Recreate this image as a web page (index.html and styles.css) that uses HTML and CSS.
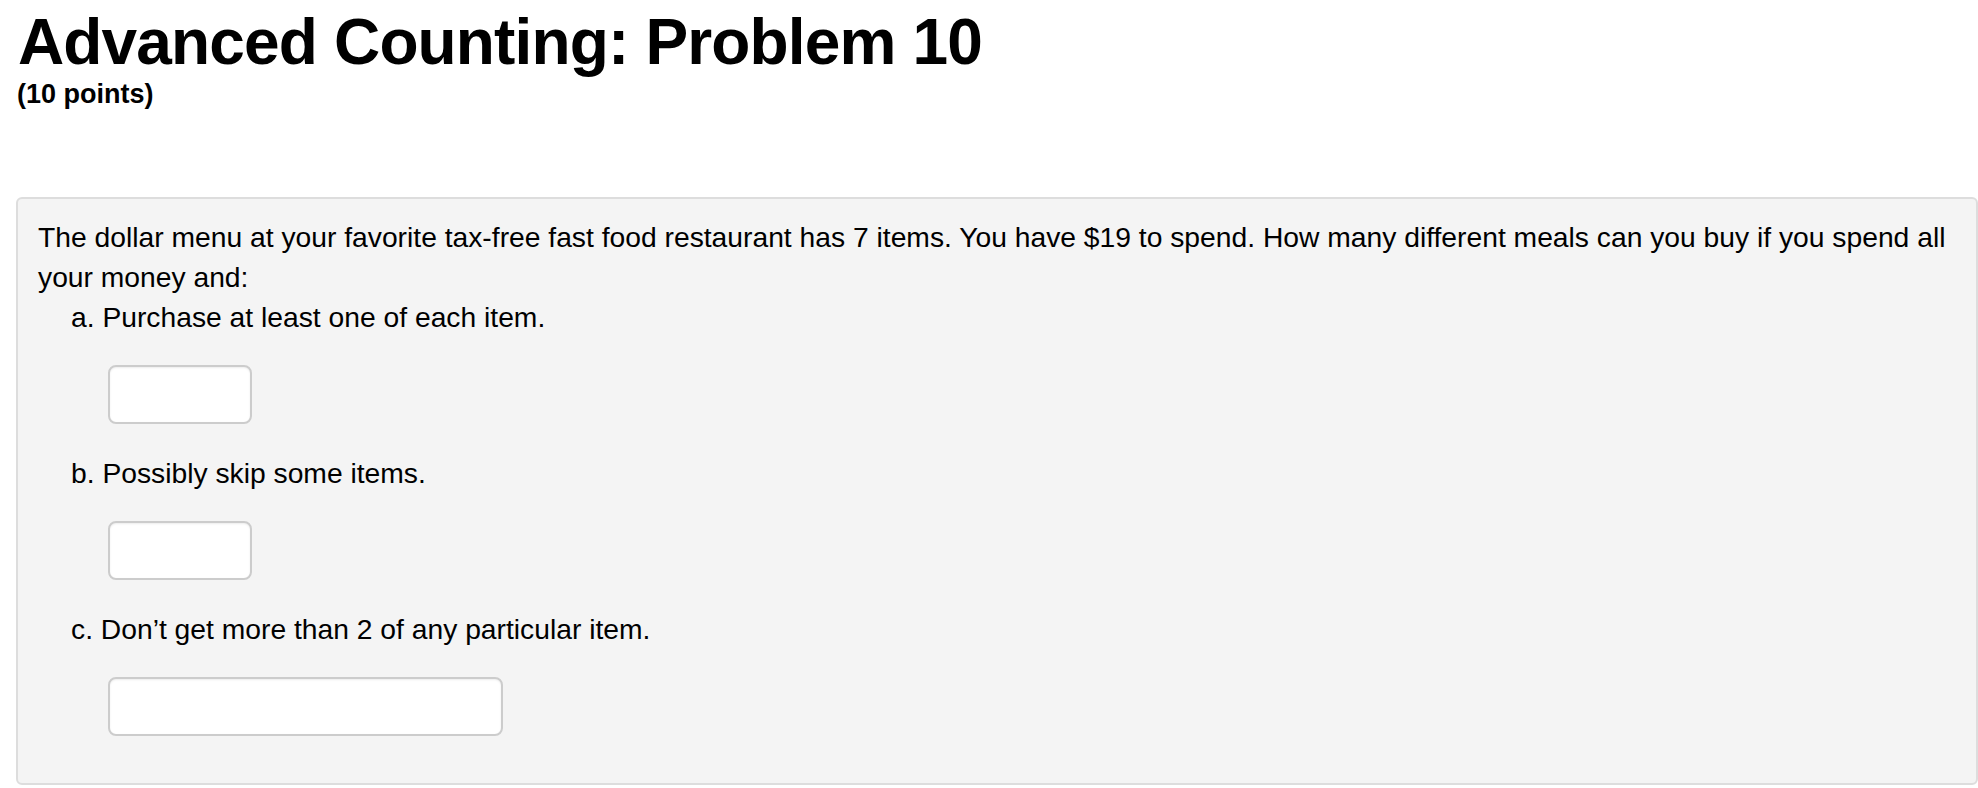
FILE: index.html
```html
<!DOCTYPE html>
<html lang="en">
<head>
<meta charset="utf-8">
<title>Advanced Counting: Problem 10</title>
<link rel="stylesheet" href="styles.css">
</head>
<body>
<div class="page">
  <h1 class="title">Advanced Counting: Problem 10</h1>
  <div class="points">(10 points)</div>
  <div class="panel">
    <p class="prompt">The dollar menu at your favorite tax-free fast food restaurant has 7 items. You have $19 to spend. How many different meals can you buy if you spend all your money and:</p>
    <div class="item">
      <div class="label">a. Purchase at least one of each item.</div>
      <input class="answer" type="text">
    </div>
    <div class="item">
      <div class="label">b. Possibly skip some items.</div>
      <input class="answer" type="text">
    </div>
    <div class="item">
      <div class="label">c. Don’t get more than 2 of any particular item.</div>
      <input class="answer wide" type="text">
    </div>
  </div>
</div>
</body>
</html>
```

FILE: styles.css
```css
html, body {
  margin: 0;
  padding: 0;
  background: #ffffff;
}

.page {
  padding-left: 16px;
  font-family: "Liberation Sans", Arial, Helvetica, sans-serif;
  color: #000;
}

.title {
  margin: 6px 0 0 2px;
  font-size: 64px;
  line-height: 72px;
  font-weight: bold;
  letter-spacing: -0.85px;
}

.points {
  margin: 1px 0 0 1px;
  font-size: 27px;
  line-height: 30px;
  font-weight: bold;
}

.panel {
  margin-top: 88px;
  background: #f4f4f4;
  border: 2px solid #dddddd;
  border-radius: 6px;
  padding: 18px 20px 47px 20px;
  font-size: 28.25px;
  line-height: 40px;
}

.prompt {
  margin: 0;
}

.item {
  display: flex;
  flex-direction: column;
  align-items: flex-start;
}

.item + .item {
  margin-top: 29px;
}

.label {
  padding-left: 33px;
}

.answer {
  box-sizing: border-box;
  margin: 28px 0 0 70px;
  width: 144px;
  height: 59px;
  border: 2px solid #cccccc;
  border-radius: 8px;
  background: #ffffff;
  box-shadow: inset 0 1px 2px rgba(0, 0, 0, 0.08);
  padding: 0 10px;
  font: inherit;
  outline: none;
}

.answer.wide {
  width: 395px;
}
```
